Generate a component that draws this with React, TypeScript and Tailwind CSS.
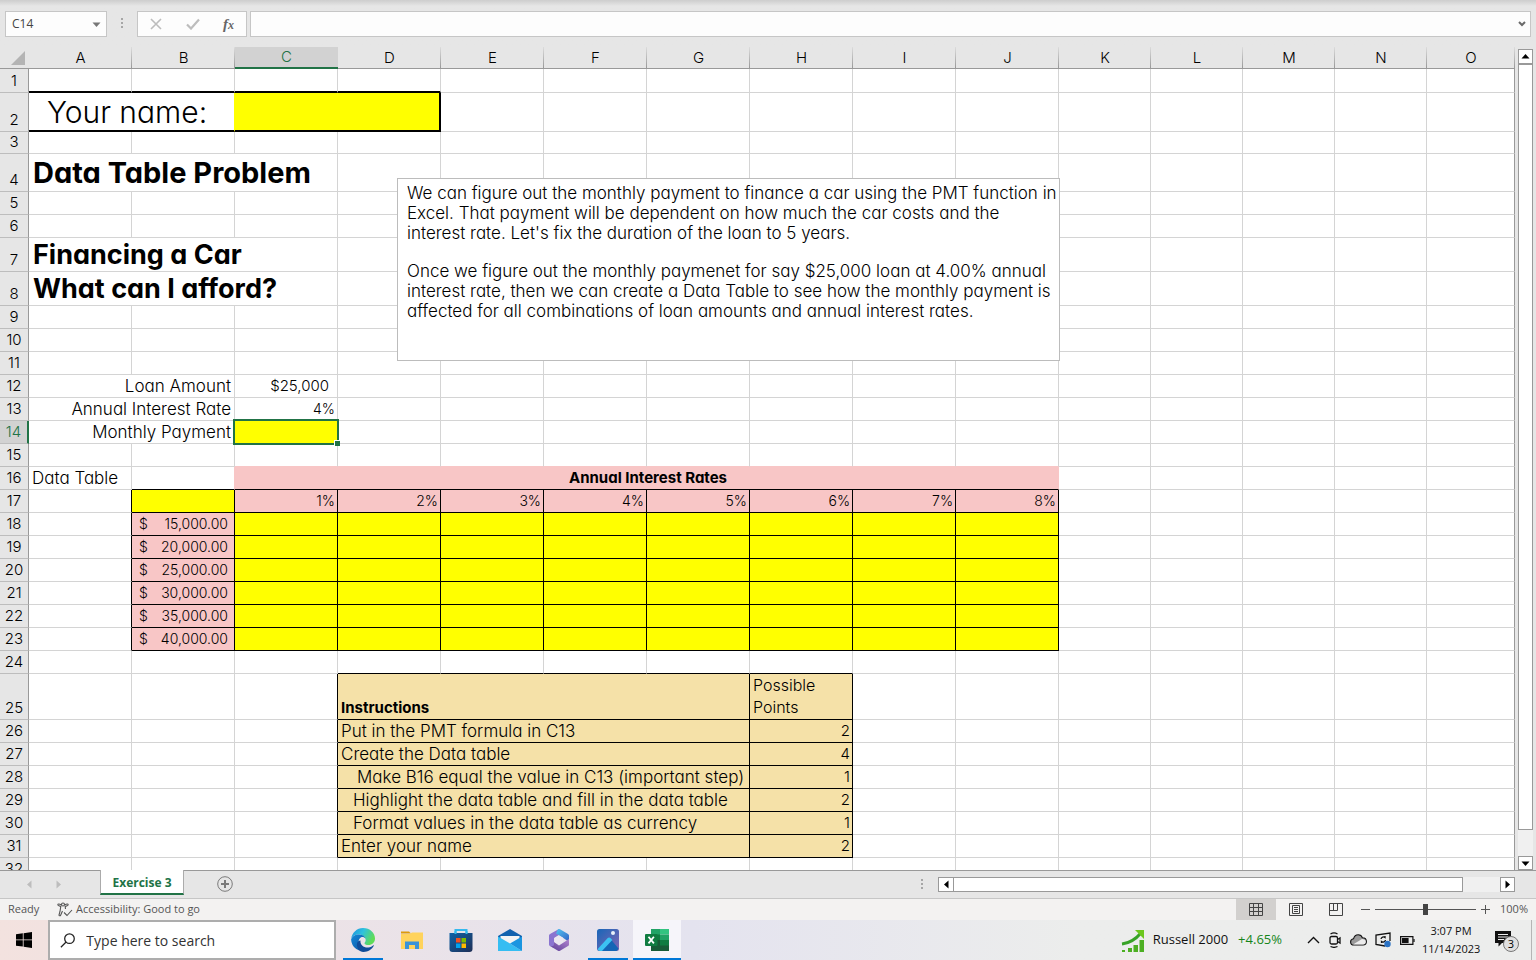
import React, { useState } from "react";
import { twMerge } from "tailwind-merge";

type Cell = { span?: number; text?: React.ReactNode; cls?: string };
type Row = { n: number; h: string; cells?: Record<number, Cell> };

const columns = ["A", "B", "C", "D", "E", "F", "G", "H", "I", "J", "K", "L", "M", "N", "O"];

const yellow = "bg-[#ffff00] border-r-black border-b-black";
const pink = "bg-[#f8c6c6] border-r-black border-b-black text-[14px] leading-[20px] text-right pr-[2px]";
const tan = "bg-[#f5e1a8] border-r-black border-b-black";
const heading = "font-bold text-[27px] leading-[30px] pl-1";

// repeats the same cell over a range of column indexes
const fill = (from: number, to: number, cell: Cell) => {
  const out: Record<number, Cell> = {};
  for (let i = from; i <= to; i++) out[i] = cell;
  return out;
};

const amountRow = (n: number, amount: string): Row => ({
  n,
  h: "h-[23px]",
  cells: {
    0: { cls: "border-r-black" },
    1: {
      cls: pink,
      text: (
        <span className="flex justify-between pr-1 pl-1">
          <span>$</span>
          <span>{amount}</span>
        </span>
      ),
    },
    ...fill(2, 9, { cls: yellow }),
  },
});

const stepRow = (n: number, step: string, points: number, indent = ""): Row => ({
  n,
  h: "h-[23px]",
  cells: {
    2: { cls: "border-r-black" },
    3: { span: 4, text: step, cls: twMerge(tan, indent) },
    7: { text: points, cls: twMerge(tan, "text-right text-[15px] leading-[20px] pr-[2px]") },
  },
});

const rows: Row[] = [
  { n: 1, h: "h-[24px]", cells: fill(0, 3, { cls: "border-b-2 border-b-black" }) },
  {
    n: 2,
    h: "h-[39px]",
    cells: {
      0: {
        span: 2,
        text: "Your name:",
        cls: "border-r-[#ffff00] border-b-2 border-b-black text-[30px] leading-[34px] pl-[18px]",
      },
      2: { span: 2, cls: "bg-[#ffff00] border-r-2 border-b-2 border-r-black border-b-black" },
    },
  },
  { n: 3, h: "h-[22px]" },
  {
    n: 4,
    h: "h-[38px]",
    cells: {
      0: { span: 3, text: "Data Table Problem", cls: "font-bold text-[29px] leading-[34px] pl-1" },
    },
  },
  { n: 5, h: "h-[23px]" },
  { n: 6, h: "h-[23px]" },
  { n: 7, h: "h-[34px]", cells: { 0: { span: 3, text: "Financing a Car", cls: heading } } },
  { n: 8, h: "h-[34px]", cells: { 0: { span: 3, text: "What can I afford?", cls: heading } } },
  { n: 9, h: "h-[23px]" },
  { n: 10, h: "h-[23px]" },
  { n: 11, h: "h-[23px]" },
  {
    n: 12,
    h: "h-[23px]",
    cells: {
      0: { span: 2, text: "Loan Amount", cls: "text-right pr-[3px]" },
      2: { text: "$25,000", cls: "text-right text-[15px] leading-[20px] pr-2" },
    },
  },
  {
    n: 13,
    h: "h-[23px]",
    cells: {
      0: { span: 2, text: "Annual Interest Rate", cls: "text-right pr-[3px]" },
      2: { text: "4%", cls: "text-right text-[14px] leading-[20px] pr-[2px]" },
    },
  },
  {
    n: 14,
    h: "h-[23px]",
    cells: {
      0: { span: 2, text: "Monthly Payment", cls: "text-right pr-[3px]" },
      2: {
        cls: "relative overflow-visible bg-[#ffff00]",
        text: (
          <span className="absolute -inset-[2px] z-10 border-2 border-[#217346]">
            <span className="absolute -right-[3px] -bottom-[3px] h-[6px] w-[6px] border-t border-l border-white bg-[#217346]" />
          </span>
        ),
      },
    },
  },
  { n: 15, h: "h-[23px]", cells: fill(2, 9, { cls: "border-b-[#f8c6c6]" }) },
  {
    n: 16,
    h: "h-[23px]",
    cells: {
      0: { text: "Data Table" },
      1: { cls: "border-r-[#f8c6c6] border-b-black" },
      2: {
        span: 8,
        text: "Annual Interest Rates",
        cls: "bg-[#f8c6c6] border-r-[#f8c6c6] border-b-black text-center font-bold text-[15px] leading-[20px]",
      },
    },
  },
  {
    n: 17,
    h: "h-[23px]",
    cells: {
      0: { cls: "border-r-black" },
      1: { cls: yellow },
      ...Object.fromEntries([1, 2, 3, 4, 5, 6, 7, 8].map((p) => [p + 1, { text: `${p}%`, cls: pink }])),
    },
  },
  amountRow(18, "15,000.00"),
  amountRow(19, "20,000.00"),
  amountRow(20, "25,000.00"),
  amountRow(21, "30,000.00"),
  amountRow(22, "35,000.00"),
  amountRow(23, "40,000.00"),
  { n: 24, h: "h-[23px]", cells: fill(3, 7, { cls: "border-b-black" }) },
  {
    n: 25,
    h: "h-[46px]",
    cells: {
      2: { cls: "border-r-black" },
      3: { span: 4, text: "Instructions", cls: twMerge(tan, "font-bold text-[15px] leading-[20px]") },
      7: {
        text: (
          <>
            Possible
            <br />
            Points
          </>
        ),
        cls: twMerge(tan, "text-[16px] leading-[22px]"),
      },
    },
  },
  stepRow(26, "Put in the PMT formula in C13", 2),
  stepRow(27, "Create the Data table", 4),
  stepRow(28, "Make B16 equal the value in C13 (important step)", 1, "pl-[19px]"),
  stepRow(29, "Highlight the data table and fill in the data table", 2, "pl-[15px]"),
  stepRow(30, "Format values in the data table as currency", 1, "pl-[15px]"),
  stepRow(31, "Enter your name", 2),
  { n: 32, h: "h-[23px]" },
];

function SheetRow({ row }: { row: Row }) {
  const tds: React.ReactNode[] = [];
  for (let c = 0; c < columns.length; ) {
    const cell = row.cells?.[c] ?? {};
    tds.push(
      <td
        key={c}
        colSpan={cell.span}
        className={twMerge(
          "overflow-hidden whitespace-nowrap border-r border-b border-[#d4d4d4] p-0 pb-px pl-[3px] align-bottom",
          c === 14 ? "border-r-[#999]" : "",
          cell.cls
        )}
      >
        {cell.text}
      </td>
    );
    c += cell.span ?? 1;
  }
  const active = row.n === 14;
  return (
    <tr className={row.h}>
      <th
        scope="row"
        className={`border-b border-[#bdbdbd] p-0 pb-px align-bottom text-[15px] font-light ${
          active
            ? "border-r-2 border-r-[#217346] bg-[#d2d2d2] text-[#217346]"
            : "border-r border-r-[#999] bg-[#e6e6e6]"
        }`}
      >
        {row.n}
      </th>
      {tds}
    </tr>
  );
}

function Sheet() {
  return (
    <table className="w-full table-fixed border-separate border-spacing-0 bg-white text-[17px] leading-[20px] font-light text-black">
      <colgroup>
        <col className="w-[29px]" />
        {columns.map((c, i) => (
          <col key={c} className={i < 10 ? "w-[103px]" : i < 14 ? "w-[92px]" : ""} />
        ))}
      </colgroup>
      <thead>
        <tr className="h-[22px]">
          <th className="border-b border-[#999] bg-[#e6e6e6] p-0">
            <svg className="ml-[11px]" width="14" height="14" viewBox="0 0 14 14">
              <path d="M14 0v14H0z" fill="#b4b4b4" />
            </svg>
          </th>
          {columns.map((c) => (
            <th
              key={c}
              scope="col"
              className={`p-0 text-[15px] font-light leading-[18px] ${
                c === "C"
                  ? "border-b-2 border-[#217346] bg-[#d2d2d2] text-[#217346]"
                  : "border-b border-[#999] bg-[#e6e6e6] bg-[linear-gradient(#dcdcdc,#999)] bg-[length:1px_100%] bg-right bg-no-repeat"
              }`}
            >
              {c}
            </th>
          ))}
        </tr>
      </thead>
      <tbody>
        {rows.map((row) => (
          <SheetRow key={row.n} row={row} />
        ))}
      </tbody>
    </table>
  );
}

function Triangle({ d, className = "fill-black" }: { d: string; className?: string }) {
  return (
    <svg width="9" height="9" viewBox="0 0 9 9" className={className}>
      <path d={d} />
    </svg>
  );
}

const UP = "M4.500 2L8.500 6.500H.5z";
const DOWN = "M.5 2.500h8L4.500 7z";
const LEFT = "M2 4.500L6.500 .5v8z";
const RIGHT = "M7 4.500L2.500 .5v8z";

function Dots() {
  return (
    <svg width="3" height="12" viewBox="0 0 3 12" fill="#a6a6a6">
      <path d="M0 0h2v2H0zM0 4h2v2H0zM0 8h2v2H0z" />
    </svg>
  );
}

function FormulaBar() {
  return (
    <div className="flex h-[47px] items-start bg-linear-to-b from-[#cdcdcd] to-[#e6e6e6] to-[6px] pt-[11px] pr-[5px] pl-[5px]">
      <div className="flex h-[26px] w-[102px] items-center border border-[#c6c6c6] bg-[#fdfdfd] pr-[5px] pl-[6px]">
        <input
          aria-label="Name Box"
          defaultValue="C14"
          className="w-full min-w-0 bg-transparent text-[12px] text-[#444] outline-none"
        />
        <button aria-label="Open name list">
          <Triangle d={DOWN} className="fill-[#777]" />
        </button>
      </div>
      <div className="flex h-[26px] w-[30px] items-center justify-center">
        <Dots />
      </div>
      <div className="flex h-[26px] w-[110px] items-center justify-between border border-[#c6c6c6] bg-[#fdfdfd] px-3">
        <button aria-label="Cancel">
          <svg width="12" height="12" viewBox="0 0 12 12" fill="none" stroke="#bdbdbd" strokeWidth="1.600">
            <path d="M1 1l10 10M11 1L1 11" />
          </svg>
        </button>
        <button aria-label="Enter">
          <svg width="14" height="12" viewBox="0 0 14 12" fill="none" stroke="#bdbdbd" strokeWidth="2.200">
            <path d="M1 6.500l4 4L13 1.500" />
          </svg>
        </button>
        <button
          aria-label="Insert Function"
          className="font-['Liberation_Serif',serif] text-[15px] leading-[20px] font-bold text-[#666] italic"
        >
          f<span className="text-[12px]">x</span>
        </button>
      </div>
      <div className="ml-[3px] flex h-[26px] flex-1 items-center border border-[#c6c6c6] bg-[#fdfdfd] pr-1">
        <input aria-label="Formula" className="h-full flex-1 bg-transparent px-2 text-[13px] outline-none" />
        <button aria-label="Expand Formula Bar">
          <svg width="8" height="6" viewBox="0 0 8 6" fill="none" stroke="#6a6a6a" strokeWidth="2">
            <path d="M1 1l3 3 3-3" />
          </svg>
        </button>
      </div>
    </div>
  );
}

function TabBar() {
  return (
    <div className="flex h-[28px] items-start border-b border-[#c6c6c6] bg-[#e6e6e6]">
      <div className="flex h-[26px] w-[100px] items-center gap-5 pl-[25px]">
        <button aria-label="Previous sheet">
          <Triangle d={LEFT} className="fill-[#bdbdbd]" />
        </button>
        <button aria-label="Next sheet">
          <Triangle d={RIGHT} className="fill-[#bdbdbd]" />
        </button>
      </div>
      <button className="relative -mt-px h-[25px] w-[84px] border-x border-b-2 border-x-[#ababab] border-b-[#217346] bg-white pt-[2px] text-[12px] font-bold text-[#217346]">
        Exercise 3
      </button>
      <button aria-label="New sheet" className="mt-[5px] ml-[33px]">
        <svg width="16" height="16" viewBox="0 0 16 16" fill="none" stroke="#7a7a7a">
          <circle cx="8" cy="8" r="7.300" />
          <path d="M8 4v8M4 8h8" strokeWidth="2" />
        </svg>
      </button>
      <div className="mt-2 ml-auto pr-[14px]">
        <Dots />
      </div>
      <div className="mt-[6px] mr-[21px] flex h-[15px] w-[577px] bg-[#f0f0f0]">
        <button aria-label="Scroll left" className="flex w-[16px] items-center justify-center border border-[#999] bg-white">
          <Triangle d={LEFT} />
        </button>
        <div className="-ml-px w-[510px] border border-[#999] bg-white" />
        <button aria-label="Scroll right" className="ml-auto flex w-[15px] items-center justify-center border border-[#999] bg-white">
          <Triangle d={RIGHT} />
        </button>
      </div>
    </div>
  );
}

function StatusBar() {
  const [zoom, setZoom] = useState(50);
  return (
    <div className="flex h-[21px] items-center bg-[#f3f2f1] pr-2 pl-2 text-[11px] text-[#555]">
      <span className="w-[49px]">Ready</span>
      <svg width="16" height="15" viewBox="0 0 16 15" fill="none" stroke="#555" strokeWidth="1.100">
        <circle cx="6" cy="2.500" r="1.500" />
        <path d="M4.500 2.800C3 2.300 1 1.500 .8 2.600s2 1.400 3 1.800L3 9.500 2 13c0 1 1.300 1 1.600.2L5.500 9M7.500 2.800c1.500-.5 3.500-1.300 3.700-.2s-2 1.400-3 1.800L8.500 7" />
        <path d="M7 10.500l3 3L15 8" />
      </svg>
      <span className="pl-[3px]">Accessibility: Good to go</span>
      <div className="ml-auto flex h-full">
        <button aria-label="Normal" className="flex w-[40px] items-center justify-center bg-[#d2d0ce]">
          <svg width="14" height="14" viewBox="0 0 14 14" fill="none" stroke="#444">
            <path d="M.5 .5h13v12H.5zM.5 4.500h13M.5 8.500h13M4.500 .5v12M9.500 .5v12" />
          </svg>
        </button>
        <button aria-label="Page Layout" className="flex w-[40px] items-center justify-center">
          <svg width="14" height="14" viewBox="0 0 14 14" fill="none" stroke="#444">
            <path d="M.5 .5h13v12H.5zM3.500 2.500h7v8h-7zM5 4.500h4M5 6.500h4M5 8.500h4" />
          </svg>
        </button>
        <button aria-label="Page Break Preview" className="flex w-[40px] items-center justify-center">
          <svg width="14" height="14" viewBox="0 0 14 14" fill="none" stroke="#444">
            <path d="M.5 .5h13v12H.5zM.5 7.500h8v-7M4.500 .5v7" />
          </svg>
        </button>
      </div>
      <button aria-label="Zoom out" className="ml-[5px]">
        <svg width="9" height="9" viewBox="0 0 9 9" stroke="#555">
          <path d="M0 4.500h9" />
        </svg>
      </button>
      <input
        type="range"
        aria-label="Zoom"
        value={zoom}
        onChange={(e) => setZoom(Number(e.target.value))}
        className="mx-[5px] h-[11px] w-[101px] appearance-none bg-[linear-gradient(#555,#555)] bg-[length:100%_1px] bg-center bg-no-repeat [&::-webkit-slider-thumb]:h-[11px] [&::-webkit-slider-thumb]:w-[5px] [&::-webkit-slider-thumb]:appearance-none [&::-webkit-slider-thumb]:bg-[#444]"
      />
      <button aria-label="Zoom in">
        <svg width="9" height="9" viewBox="0 0 9 9" stroke="#555">
          <path d="M0 4.500h9M4.500 0v9" />
        </svg>
      </button>
      <span className="w-[38px] text-right">100%</span>
    </div>
  );
}

const EdgeIcon = () => (
  <svg width="24" height="24" viewBox="0 0 24 24">
    <defs>
      <linearGradient id="edgeTop" x1="0" y1="0" x2="1" y2=".4">
        <stop offset="0" stopColor="#1b8ddb" />
        <stop offset=".5" stopColor="#2fc2df" />
        <stop offset="1" stopColor="#5fdc57" />
      </linearGradient>
      <linearGradient id="edgeMid" x1="0" y1="0" x2="1" y2="1">
        <stop offset="0" stopColor="#1389d8" />
        <stop offset="1" stopColor="#0d4f9e" />
      </linearGradient>
    </defs>
    <path d="M.2 11C.8 4.800 6 0 12 0c7 0 12 5 12 10.500 0 4-3 6.500-6.500 6.500-2.500 0-4-.9-4-1.800 0-.7 1.200-1.200 1.200-3.200C14.700 9 11.500 6.500 8 6.500 4 6.500 1 8.500.2 11z" fill="url(#edgeTop)" />
    <path d="M.1 11.500C1 8.500 4 6.500 8 6.500c3 0 5.800 1.500 6.600 4.200C13.800 9.500 12.500 9 11.500 9 9 9 7.500 11.500 7.500 14.500c0 4.500 4 8 8.500 8A12 12 0 0 1 .1 11.500z" fill="url(#edgeMid)" />
    <path d="M9.500 12.500C8.800 17 13 20 17.500 19.500c2-.2 3.700-1 4.800-2.200.4-.3.8 0 .5.500C21 21.500 17 24 12.500 24 8 23.800 5.500 19.500 6 15.500c.2-1.500 1.500-3 3.500-3z" fill="#0f4c99" />
  </svg>
);

const ExplorerIcon = () => (
  <svg width="22" height="20" viewBox="0 0 22 20">
    <path d="M0 1.500h8l2 2H0z" fill="#dc9a0c" />
    <path d="M0 4h8.500L11 2.500h11V19H0z" fill="#ffd35c" />
    <path d="M4 11.500h14V19h-4v-4H8v4H4z" fill="#3a93d8" />
  </svg>
);

const StoreIcon = () => (
  <svg width="24" height="24" viewBox="0 0 24 24">
    <defs>
      <linearGradient id="storeBag" x1="0" y1="0" x2="1" y2="1">
        <stop offset="0" stopColor="#0f63a8" />
        <stop offset="1" stopColor="#1f2f56" />
      </linearGradient>
    </defs>
    <path d="M6.500 7V2h11v5" fill="none" stroke="#35b9ee" strokeWidth="2" />
    <path d="M.5 5h23v16a3 3 0 0 1-3 3h-17a3 3 0 0 1-3-3z" fill="url(#storeBag)" />
    <path d="M6.500 3v3M17.500 3v3" stroke="#35b9ee" strokeWidth="2" />
    <path d="M7 10h4.500v4.500H7z" fill="#f25022" />
    <path d="M12.500 10H17v4.500h-4.500z" fill="#7fba00" />
    <path d="M7 15.500h4.500V20H7z" fill="#00a4ef" />
    <path d="M12.500 15.500H17V20h-4.500z" fill="#ffb900" />
  </svg>
);

const MailIcon = () => (
  <svg width="24" height="22" viewBox="0 0 24 22">
    <path d="M12 0l12 7v4H0V7z" fill="#1262ae" />
    <path d="M2.500 7h19v6l-9 5-10-5z" fill="#f3f3f3" />
    <path d="M0 7.500L12 14.500 24 22H0z" fill="#35bdf2" />
    <path d="M24 7.500V22L12 14.500z" fill="#1b95e0" />
  </svg>
);

const OfficeIcon = () => (
  <svg width="20" height="22" viewBox="0 0 20 22">
    <defs>
      <linearGradient id="officeRight" x1="0" y1="0" x2="1" y2="1">
        <stop offset="0" stopColor="#53c5f1" />
        <stop offset="1" stopColor="#2f5fc4" />
      </linearGradient>
      <linearGradient id="officeBottom" x1="0" y1="1" x2="1" y2="0">
        <stop offset="0" stopColor="#5b3e96" />
        <stop offset="1" stopColor="#b184cf" />
      </linearGradient>
    </defs>
    <path d="M10 0L1 5Q0 5.600 0 6.500v9Q0 16.500 1 17l4 2V9l8-5z" fill="#8a74d0" />
    <path d="M9 .3q1-.5 2 0l8 4.700q1 .6 1 1.500V13l-6-4.200-7-4.300z" fill="url(#officeRight)" />
    <path d="M5 13l5 3.500L20 10v5.500q0 1-1 1.500l-8 4.700q-1 .5-2 0L1 17q4 1 4-1.500z" fill="url(#officeBottom)" />
    <path d="M10 6.500l4 2.300v4.500L10 15.600l-4-2.300V8.800z" fill="#ebe6f0" />
  </svg>
);

const PhotosIcon = () => (
  <svg width="22" height="22" viewBox="0 0 22 22">
    <defs>
      <linearGradient id="photoSky" x1="0" y1="0" x2="1" y2="1">
        <stop offset="0" stopColor="#1766b8" />
        <stop offset="1" stopColor="#8467b4" />
      </linearGradient>
    </defs>
    <rect width="22" height="22" rx="2.500" fill="url(#photoSky)" />
    <path d="M1 20.500L10.500 10c1-1 2-1 3 0l8 9.500C21 21 20 22 19 22H3c-1 0-1.600-.6-2-1.500z" fill="#1565b5" />
    <path d="M.7 20L10.500 9.200c1-1 2.300-1 3.200 0l1.600 1.800L5 22H3c-1 0-2-.8-2.300-2z" fill="#3cc3f3" />
    <circle cx="16" cy="4" r="2" fill="#e9f1fa" />
  </svg>
);

const ExcelIcon = () => (
  <svg width="24" height="22" viewBox="0 0 24 22">
    <path d="M6 0h9v22H6z" fill="#21a366" />
    <path d="M15 0h9v5.500h-9z" fill="#33c481" />
    <path d="M6 5.500h9V11H6z" fill="#107c41" />
    <path d="M15 5.500h9V11h-9z" fill="#21a366" />
    <path d="M6 11h18v11H6z" fill="#185c37" />
    <path d="M15 11h9v5.500h-9z" fill="#107c41" />
    <rect y="5" width="12.500" height="12" rx="1" fill="#107c41" />
    <path d="M3.500 7.800l5.400 6.600M8.900 7.800l-5.400 6.600" stroke="#fff" strokeWidth="1.800" />
  </svg>
);

const apps = [
  { name: "Microsoft Edge", icon: <EdgeIcon />, open: true },
  { name: "File Explorer", icon: <ExplorerIcon /> },
  { name: "Microsoft Store", icon: <StoreIcon /> },
  { name: "Mail", icon: <MailIcon /> },
  { name: "Microsoft 365", icon: <OfficeIcon /> },
  { name: "Photos", icon: <PhotosIcon />, open: true },
  { name: "Excel", icon: <ExcelIcon />, open: true, active: true },
];

function Tray() {
  return (
    <div className="ml-auto flex h-full items-center">
      <button className="flex items-center">
        <svg width="24" height="23" viewBox="0 0 24 23">
          <path d="M1 21h3v2H1zM7 19h4v4H7zM12.500 16H17v7h-4.500zM18.500 11H23v12h-4.500z" fill="#4caf22" />
          <path d="M1 15c8-1 13-4 18.500-10.500" fill="none" stroke="#37a327" strokeWidth="3" />
          <path d="M14 1h9v9z" fill="#6cc71e" />
        </svg>
        <span className="pl-2 text-[13px] text-[#111]">Russell 2000</span>
        <span className="pl-[10px] text-[13px] text-[#15851a]">+4.65%</span>
      </button>
      <div className="ml-[25px] flex items-center gap-2">
        <button aria-label="Show hidden icons">
          <svg width="13" height="8" viewBox="0 0 13 8" fill="none" stroke="#111" strokeWidth="1.400">
            <path d="M1 7l5.500-5.500L12 7" />
          </svg>
        </button>
        <button aria-label="Meet Now">
          <svg width="14" height="16" viewBox="0 0 14 16" fill="none" stroke="#111" strokeWidth="1.300">
            <rect x="2" y="4.500" width="7.500" height="7.500" rx="1.500" />
            <path d="M9.500 7.500L12 6v5L9.500 9.500M2.500 2c2-1.200 5-1.200 7 0M2.500 14.500c2 1 5 1 7 0" />
          </svg>
        </button>
        <button aria-label="OneDrive">
          <svg width="17" height="12" viewBox="0 0 17 12" stroke="#111" strokeWidth="1.100">
            <path d="M4 11C1.800 11 .6 9.600 .6 7.900S2 5 3.500 4.800C4.300 2 6 .8 8.200 .8c2 0 3.600 1.200 4.200 3 2.400 0 4 1.600 4 3.700S15 11 13 11z" fill="#9a9a9a" />
            <path d="M3 10.400L12 5c2 0 3.800 1 3.800 2.700 0 1.500-1.100 2.700-2.800 2.700z" fill="#ececec" stroke="none" />
          </svg>
        </button>
        <button aria-label="Windows Update">
          <svg width="17" height="16" viewBox="0 0 17 16" fill="none" stroke="#111" strokeWidth="1.300">
            <path d="M10 14L1 12.500V3l14-2v8" />
            <path d="M6 7a2.500 2.500 0 0 1 4-1.500V4M10.500 8A2.500 2.500 0 0 1 6.500 9.500V11" />
            <circle cx="12.500" cy="12" r="3.200" fill="#2a72c3" stroke="none" />
          </svg>
        </button>
        <button aria-label="Battery">
          <svg width="15" height="9" viewBox="0 0 15 9" fill="none" stroke="#111" strokeWidth="1.200">
            <path d="M.6 .6h12.300v7.800H.6z" />
            <path d="M2.500 2.500h5.500v4H2.500zM14 3v3" fill="#111" />
          </svg>
        </button>
      </div>
      <button className="ml-[7px] w-[58px] text-center text-[11px] leading-[18px] text-[#111]">
        3:07 PM
        <br />
        11/14/2023
      </button>
      <button aria-label="3 notifications" className="relative ml-[15px] h-6 w-6">
        <svg width="24" height="24" viewBox="0 0 24 24">
          <path d="M0 3h16v12H7l-3.500 3.500V15H0z" fill="#111" />
          <path d="M3 6.500h10M3 9h10M3 11.500h6" stroke="#eee" />
          <circle cx="16" cy="16" r="7.500" fill="#e0e0e0" stroke="#777" />
        </svg>
        <span className="absolute top-2 left-2 h-4 w-4 text-center text-[11px] leading-4 text-black">3</span>
      </button>
      <div className="ml-3 h-full w-[5px] border-l border-[#b5b5b5]" />
    </div>
  );
}

function Taskbar() {
  return (
    <footer className="flex h-[40px] items-center bg-linear-to-r from-[#f3e2df] via-[#e4e3ef] via-45% to-[#ecedec] to-70%">
      <button aria-label="Start" className="flex h-full w-[48px] items-center justify-center">
        <svg width="16" height="16" viewBox="0 0 16 16">
          <path d="M0 2.300L6.800 1.300v6.200H0zM7.600 1.200L16 0v7.500H7.600zM0 8.300h6.800v6.300L0 13.700zM7.600 8.300H16V16l-8.400-1.200z" />
        </svg>
      </button>
      <label className="flex h-full w-[288px] items-center border-2 border-[#adadad] bg-white pl-[10px]">
        <svg width="17" height="17" viewBox="0 0 17 17" fill="none" stroke="#222" strokeWidth="1.400">
          <circle cx="10.500" cy="6.500" r="5.300" />
          <path d="M6.800 10.200L1 16" />
        </svg>
        <input
          aria-label="Search"
          placeholder="Type here to search"
          className="ml-[11px] w-full min-w-0 text-[14px] outline-none placeholder:text-[#333]"
        />
      </label>
      <div className="ml-[3px] flex h-full gap-px">
        {apps.map((app) => (
          <button
            key={app.name}
            aria-label={app.name}
            className={`relative flex h-full w-[48px] items-center justify-center ${app.active ? "bg-[#f6f5fa]" : ""}`}
          >
            {app.icon}
            {app.open && (
              <span className={`absolute bottom-0 h-[2px] bg-[#0078d7] ${app.active ? "inset-x-0" : "inset-x-1"}`} />
            )}
          </button>
        ))}
      </div>
      <Tray />
    </footer>
  );
}

export default function App() {
  return (
    <div className="flex h-screen flex-col overflow-hidden bg-[#e6e6e6] font-['Open_Sans','Noto_Sans',sans-serif]">
      <FormulaBar />
      <main className="relative flex min-h-0 flex-1 border-b border-[#999]">
        <div className="min-w-0 flex-1 overflow-hidden font-[Inter,sans-serif] [font-feature-settings:'cv11']">
          <Sheet />
          <div className="absolute top-[131px] left-[397px] h-[183px] w-[663px] border border-[#bcbcbc] bg-white pt-1 pl-[9px] text-[17px] leading-[20px] font-light whitespace-nowrap">
            <p>
              We can figure out the monthly payment to finance a car using the PMT function in
              <br />
              Excel. That payment will be dependent on how much the car costs and the
              <br />
              interest rate. Let's fix the duration of the loan to 5 years.
            </p>
            <p className="mt-[18px]">
              Once we figure out the monthly paymenet for say $25,000 loan at 4.00% annual
              <br />
              interest rate, then we can create a Data Table to see how the monthly payment is
              <br />
              affected for all combinations of loan amounts and annual interest rates.
            </p>
          </div>
        </div>
        <div className="flex w-[21px] flex-col pt-[2px] pr-[3px] pl-[3px]">
          <button aria-label="Scroll up" className="flex h-[15px] items-center justify-center border border-[#999] bg-white">
            <Triangle d={UP} />
          </button>
          <div className="flex-1 bg-[#f0f0f0] pb-[26px]">
            <div className="h-full border border-[#999] bg-white" />
          </div>
          <button aria-label="Scroll down" className="flex h-[14px] items-center justify-center border border-[#999] bg-white">
            <Triangle d={DOWN} />
          </button>
        </div>
      </main>
      <TabBar />
      <StatusBar />
      <Taskbar />
    </div>
  );
}
